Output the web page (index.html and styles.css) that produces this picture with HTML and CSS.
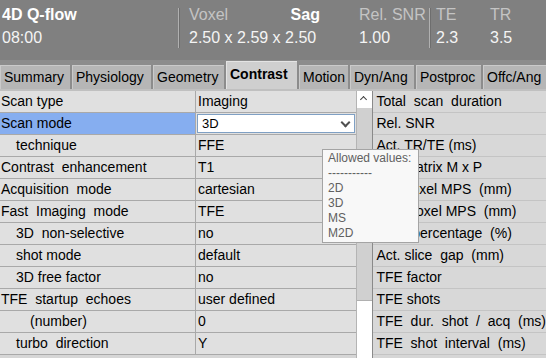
FILE: index.html
```html
<!DOCTYPE html>
<html lang="en">
<head>
    <meta charset="UTF-8">
    <title>4D Q-flow - Contrast</title>
    <link rel="stylesheet" href="styles.css">
</head>
<body>
    <div class="header">
        <div class="hcol name">
            <div class="title">4D Q-flow</div>
            <div class="val">08:00</div>
        </div>
        <div class="divider"></div>
        <div class="hcol voxel">
            <div class="lbl">Voxel <span class="orient">Sag</span></div>
            <div class="val">2.50 x 2.59 x 2.50</div>
        </div>
        <div class="hcol snr">
            <div class="lbl">Rel. SNR</div>
            <div class="val">1.00</div>
        </div>
        <div class="divider"></div>
        <div class="hcol te">
            <div class="lbl">TE</div>
            <div class="val">2.3</div>
        </div>
        <div class="hcol tr">
            <div class="lbl">TR</div>
            <div class="val">3.5</div>
        </div>
    </div>

    <div class="tabs">
        <div class="tab" style="width:70px">Summary</div>
        <div class="tab" style="width:79px">Physiology</div>
        <div class="tab" style="width:71px">Geometry</div>
        <div class="tab active" style="width:71px">Contrast</div>
        <div class="tab" style="width:49px">Motion</div>
        <div class="tab" style="width:64px">Dyn/Ang</div>
        <div class="tab" style="width:65px">Postproc</div>
        <div class="tab last">Offc/Ang</div>
    </div>

    <div class="content">
        <div class="params">
            <div class="row"><div class="label">Scan type</div><div class="value">Imaging</div></div>
            <div class="row sel"><div class="label">Scan mode</div><div class="value"><div class="combo">3D<span class="chev"></span></div></div></div>
            <div class="row"><div class="label in1">technique</div><div class="value">FFE</div></div>
            <div class="row"><div class="label">Contrast&nbsp; enhancement</div><div class="value">T1</div></div>
            <div class="row"><div class="label">Acquisition&nbsp; mode</div><div class="value">cartesian</div></div>
            <div class="row"><div class="label">Fast&nbsp; Imaging&nbsp; mode</div><div class="value">TFE</div></div>
            <div class="row"><div class="label in1">3D&nbsp; non-selective</div><div class="value">no</div></div>
            <div class="row"><div class="label in1">shot mode</div><div class="value">default</div></div>
            <div class="row"><div class="label in1">3D free factor</div><div class="value">no</div></div>
            <div class="row"><div class="label">TFE&nbsp; startup&nbsp; echoes</div><div class="value">user defined</div></div>
            <div class="row"><div class="label in2">(number)</div><div class="value">0</div></div>
            <div class="row"><div class="label in1">turbo&nbsp; direction</div><div class="value">Y</div></div>
        </div>
        <div class="scrollbar">
            <div class="arrow"></div>
            <div class="thumb"></div>
        </div>
        <div class="info">
            <div class="irow">Total&nbsp; scan&nbsp; duration</div>
            <div class="irow">Rel. SNR</div>
            <div class="irow">Act. TR/TE (ms)</div>
            <div class="irow">Act. matrix M x P</div>
            <div class="irow">Act. voxel MPS&nbsp; (mm)</div>
            <div class="irow">Rec. voxel MPS&nbsp; (mm)</div>
            <div class="irow">Scan percentage&nbsp; (%)</div>
            <div class="irow">Act. slice&nbsp; gap&nbsp; (mm)</div>
            <div class="irow">TFE factor</div>
            <div class="irow">TFE shots</div>
            <div class="irow">TFE&nbsp; dur.&nbsp; shot&nbsp; /&nbsp; acq&nbsp; (ms)</div>
            <div class="irow">TFE&nbsp; shot&nbsp; interval&nbsp; (ms)</div>
        </div>

        <div class="tooltip">
            <div>Allowed values:</div>
            <div>-----------</div>
            <div>2D</div>
            <div>3D</div>
            <div>MS</div>
            <div>M2D</div>
        </div>
    </div>
</body>
</html>
```

FILE: styles.css
```css
body {
    margin: 0;
    width: 546px;
    height: 358px;
    overflow: hidden;
    font-family: "Liberation Sans", Arial, sans-serif;
    background-color: #ffffff;
    color: #000000;
}
.header {
    height: 60px;
    background-color: #808080;
    display: flex;
    align-items: flex-start;
    box-sizing: border-box;
    padding-top: 6px;
    font-size: 16px;
}
.hcol {
    display: flex;
    flex-direction: column;
    gap: 5px;
}
.title {
    font-weight: bold;
    color: #ffffff;
}
.val {
    color: #f4f4f4;
}
.lbl {
    color: #c4c4c4;
}
.orient {
    font-weight: bold;
    color: #ffffff;
    margin-left: 58px;
}
.divider {
    width: 1px;
    height: 40px;
    margin-top: 2px;
    background-color: #b0b0b0;
    border-right: 1px solid #6e6e6e;
}
.name {
    width: 176px;
    padding-left: 2px;
}
.voxel {
    width: 170px;
    padding-left: 9px;
}
.snr {
    width: 70px;
}
.te {
    width: 54px;
    padding-left: 5px;
}
.tabs {
    height: 29px;
    background-color: #8c8c8c;
    display: flex;
    align-items: flex-end;
    gap: 2px;
    font-size: 14px;
}
.tab {
    height: 24px;
    line-height: 22px;
    box-sizing: border-box;
    padding-left: 3px;
    background-color: #b6b6b6;
    border-top: 1px solid #cacaca;
    border-left: 1px solid #cacaca;
    color: #000000;
    white-space: nowrap;
    overflow: hidden;
}
.tab.active {
    height: 28px;
    line-height: 24px;
    background-color: #cfcfcf;
    border-top: 1px solid #e4e4e4;
    border-left: 1px solid #e4e4e4;
    font-weight: bold;
}
.tab.last {
    flex: 1;
}
.content {
    position: relative;
    display: flex;
    height: 269px;
    background-color: #d6d6d6;
    border-top: 2px solid #c0c0c0;
}
.params {
    width: 357px;
    font-size: 14px;
}
.row {
    height: 22px;
    display: flex;
    box-sizing: border-box;
    border-bottom: 1px solid #a9a9a9;
    background-color: #e0e0e0;
}
.label {
    width: 196px;
    line-height: 21px;
    padding-left: 1px;
    box-sizing: border-box;
    border-right: 1px solid #a9a9a9;
    white-space: nowrap;
}
.label.in1 {
    padding-left: 16px;
}
.label.in2 {
    padding-left: 30px;
}
.value {
    flex: 1;
    line-height: 21px;
    padding-left: 2px;
}
.row.sel .label {
    background-color: #86aef0;
}
.row.sel .value {
    padding: 1px 1px 0 1px;
}
.combo {
    height: 19px;
    line-height: 18px;
    box-sizing: border-box;
    border: 1px solid #7fa0c4;
    background-color: #ffffff;
    padding-left: 4px;
    font-size: 13px;
    position: relative;
}
.chev {
    position: absolute;
    right: 5px;
    top: 4px;
    width: 5px;
    height: 5px;
    border-right: 2px solid #505050;
    border-bottom: 2px solid #505050;
    transform: rotate(45deg);
}
.scrollbar {
    width: 15px;
    background-color: #ffffff;
    border-left: 1px solid #b4b4b4;
    display: flex;
    flex-direction: column;
}
.arrow {
    height: 17px;
    background-color: #ffffff;
    position: relative;
}
.arrow::after {
    content: "";
    position: absolute;
    left: 4px;
    top: 6px;
    width: 4px;
    height: 4px;
    border-left: 1px solid #404040;
    border-top: 1px solid #404040;
    transform: rotate(45deg);
}
.thumb {
    height: 192px;
    background-color: #d0d0d0;
    border-bottom: 1px solid #b0b0b0;
}
.info {
    flex: 1;
    border-left: 1px solid #8a8a8a;
    font-size: 14px;
}
.irow {
    height: 22px;
    line-height: 21px;
    box-sizing: border-box;
    padding-left: 3px;
    background-color: #d8d8d8;
    border-bottom: 1px solid #c4c4c4;
    white-space: nowrap;
}
.tooltip {
    position: absolute;
    left: 322px;
    top: 58px;
    width: 97px;
    height: 94px;
    box-sizing: border-box;
    padding: 1px 0 0 5px;
    background-color: #f8f8f8;
    border: 1px solid #a4a4a4;
    font-size: 12px;
    line-height: 15px;
    color: #606060;
    white-space: nowrap;
}
```
